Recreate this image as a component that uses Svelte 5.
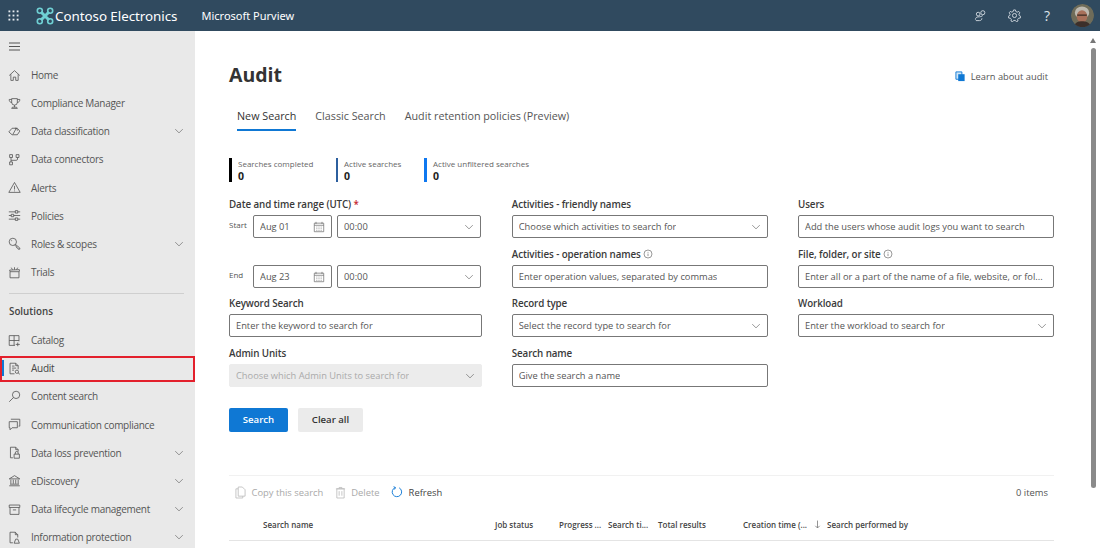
<script>
  const top = [
    { label: 'Home', icon: 'home' },
    { label: 'Compliance Manager', icon: 'trophy' },
    { label: 'Data classification', icon: 'tag', more: true },
    { label: 'Data connectors', icon: 'flow' },
    { label: 'Alerts', icon: 'alert' },
    { label: 'Policies', icon: 'sliders' },
    { label: 'Roles & scopes', icon: 'key', more: true },
    { label: 'Trials', icon: 'gift' }
  ];
  const solutions = [
    { label: 'Catalog', icon: 'catalog' },
    { label: 'Audit', icon: 'audit', active: true },
    { label: 'Content search', icon: 'search' },
    { label: 'Communication compliance', icon: 'chat' },
    { label: 'Data loss prevention', icon: 'lock', more: true },
    { label: 'eDiscovery', icon: 'bank', more: true },
    { label: 'Data lifecycle management', icon: 'archive', more: true },
    { label: 'Information protection', icon: 'shield', more: true }
  ];
  const paths = {
    home: 'M1.500 8 8 2l6.500 6M3.500 6.500V14h3v-4h3v4h3V6.500',
    trophy: 'M4.500 2h7v4.500a3.500 3.500 0 0 1-7 0zM4.500 3H1.500c0 2.500 1 3.500 3.200 3.800M11.500 3h3c0 2.500-1 3.500-3.200 3.800M8 10v2.500M4.500 14h7l-1-1.500h-5z',
    tag: 'M1 8.500 5 4h6.500l3 3.500-3 4.500H5zM6 11.500 10.500 3.500M8.500 4a2.500 2.500 0 0 1 3 3',
    flow: 'M2 2h3.500v3.500H2zM10 2h3.500v3.500H10zM2 11h3.500v3.500H2zM3.700 5.500V11M11.700 5.500V7.500a1.500 1.500 0 0 1-1.500 1.500H3.700',
    alert: 'M8 1.800 15 14H1zM8 6v4.500M8 11.700v1',
    sliders: 'M1 3.500h8M12 3.500h3M1 8h3M7 8h8M1 12.500h8M12 12.500h3M9 2v3h3V2zM4 6.500v3h3v-3zM9 11v3h3v-3z',
    key: 'M6 1.500a4.500 4.500 0 1 1-.1 9 4.500 4.500 0 0 1 .1-9zM9 9l5.500 4.500v1.500h-2l-.5-1.500-1.500-.5v-1.200L8 10M4 4.500h1',
    gift: 'M2.500 7h11v7.500h-11zM2.500 7l-.5-2 12-.5v2.500M5.500 4.500 4 2M8 4.500V1.500M10.500 4.500 12 2',
    catalog: 'M1.500 2h12v7M1.500 2v12h7M7.500 2v12M1.500 8h12M12 10.500V15M9.500 12.800H14.500',
    audit: 'M2.500 1.500h7l3 3V9M2.500 1.500V14.500H8M9.500 1.500v3h3M5 5h3M5 7.500h5M5 10h2.500M11 10a2 2 0 1 1-.1 4 2 2 0 0 1 .1-4zM12.500 13.500l2 1.500',
    search: 'M10 1.500a4.500 4.500 0 1 1-.1 9 4.500 4.500 0 0 1 .1-9zM6.700 9.300 1.500 14.500',
    chat: 'M3.500 1.500h11V10H13M1.500 4.500h10V12H5l-2.500 2.500V12H1.500z',
    lock: 'M9.500 1.500H3v13h3M9.500 1.500l3 3V7M9.500 1.500v3h3M7.500 10h6.500v5H7.500zM9 10V8.500a1.700 1.700 0 0 1 3.500 0V10',
    bank: 'M1.500 6 8 2l6.500 4zM3.500 7v5M6.500 7v5M9.500 7v5M12.500 7v5M1.500 14.500h13M2.500 12.500h11',
    archive: 'M1.500 2.500h13v3h-13zM2.500 5.500v8.500h11V5.500M6 8.500h4',
    shield: 'M9 1.500H2.500v13H6M9 1.500l3 3V8M9 1.500v3h3M7.500 15l2-5h2.500l2 5z'
  };
  const stats = [
    { label: 'Searches completed', tone: 'black', cls: 'w1' },
    { label: 'Active searches', tone: 'navy', cls: 'w2' },
    { label: 'Active unfiltered searches', tone: 'blue', cls: 'w3' }
  ];
  const columns = [
    { label: 'Search name', cls: 'c1' },
    { label: 'Job status', cls: 'c2' },
    { label: 'Progress ...', cls: 'c3' },
    { label: 'Search ti...', cls: 'c4' },
    { label: 'Total results', cls: 'c5' },
    { label: 'Creation time (...', cls: 'c6' }
  ];
</script>

{#snippet chevron(cls = '')}
  <svg class="chev {cls}" viewBox="0 0 12 8" aria-hidden="true"><path d="M1 1.500 6 6.500l5-5" /></svg>
{/snippet}

{#snippet info()}
  <svg class="info" viewBox="0 0 12 12" aria-hidden="true"><circle cx="6" cy="6" r="4.800" /><path d="M6 5.500v3M6 3.500v1" /></svg>
{/snippet}

{#snippet calendar()}
  <svg class="cal" viewBox="0 0 14 14" aria-hidden="true"><path d="M1.500 2.500h11v10h-11zM1.500 5h11M3.500 1v2.500M10.500 1v2.500M4 7h1M6.500 7h1M9 7h1M4 9h1M6.500 9h1M9 9h1M4 11h1M6.500 11h1M9 11h1" /></svg>
{/snippet}

{#snippet navRow(item)}
  <div class="nav-row" class:active={item.active}>
    <svg class="nav-icon" viewBox="0 0 16 16" aria-hidden="true"><path d={paths[item.icon]} /></svg>
    <span class="nav-label">{item.label}</span>
    {#if item.more}{@render chevron('nav-chev')}{/if}
  </div>
{/snippet}

<div class="page">
  <header class="topbar">
    <svg class="waffle" viewBox="0 0 12 12" aria-hidden="true">
      {#each [1.500, 6, 10.500] as y}
        {#each [1.500, 6, 10.500] as x}
          <rect x={x - 1} y={y - 1} width="2" height="2" />
        {/each}
      {/each}
    </svg>
    <svg class="logo" viewBox="0 0 18 18" aria-hidden="true">
      <path class="logo-x" d="M5 5 13 13M13 5 5 13" />
      <circle class="logo-c" cx="3.800" cy="3.800" r="2.500" />
      <circle class="logo-c" cx="14.200" cy="3.800" r="2.500" />
      <circle class="logo-c" cx="3.800" cy="14.200" r="2.500" />
      <circle class="logo-c" cx="14.200" cy="14.200" r="2.500" />
    </svg>
    <span class="brand">Contoso Electronics</span>
    <span class="product">Microsoft Purview</span>
    <span class="spacer"></span>
    <svg class="top-icon people" viewBox="0 0 14 14" aria-hidden="true"><circle cx="9.500" cy="4" r="2.200" /><circle cx="4.500" cy="5.500" r="2" /><path d="M1.500 11.500c0-2 1.500-3 3-3 2 0 4-.5 5-1.500M2 12.500h4c1.500 0 2.500-1 2.500-2.500" /></svg>
    <svg class="top-icon gear" viewBox="0 0 14 14" aria-hidden="true"><circle cx="7" cy="7" r="2.200" /><path d="M6 1h2l.4 1.700 1.500.7 1.600-.8 1.200 1.500-1 1.500.4 1.400 1.500.9-.4 1.900-1.800.1-1 1.300.4 1.700-1.800.8-1.100-1.400H6.100l-1.100 1.400-1.800-.8.4-1.700-1-1.300-1.800-.1-.4-1.900 1.500-.9.400-1.400-1-1.500 1.200-1.500 1.600.8 1.500-.7z" /></svg>
    <span class="help">?</span>
    <svg class="avatar" viewBox="0 0 24 24" aria-hidden="true">
      <circle cx="12" cy="12" r="12" fill="#6f6c59" />
      <ellipse cx="11.500" cy="9" rx="7.500" ry="6.500" fill="#bdb9b0" />
      <ellipse cx="11.500" cy="13" rx="5.500" ry="6.500" fill="#a8705a" />
      <path d="M6.500 11.500h10" stroke="#3a2a22" stroke-width="1.300" />
      <path d="M3 24c1-5 5-6 8.500-6s8 1 9.500 6z" fill="#3c2f2a" />
    </svg>
  </header>

  <div class="body">
    <nav class="sidebar">
      <svg class="burger" viewBox="0 0 11 9" aria-hidden="true"><path d="M0 1h11M0 4.500h11M0 8h11" /></svg>
      <div class="nav-group first">
        {#each top as item}{@render navRow(item)}{/each}
      </div>
      <div class="divider"></div>
      <div class="section">Solutions</div>
      <div class="nav-group">
        {#each solutions as item}{@render navRow(item)}{/each}
      </div>
    </nav>

    <main class="main">
      <div class="title-row">
        <h1>Audit</h1>
        <a class="learn">
          <svg viewBox="0 0 12 12" aria-hidden="true"><path class="doc-back" d="M1 1h6.500v8H1z" /><path class="doc-front" d="M3.500 3.500H10.500V11H3.500z" /></svg>
          Learn about audit
        </a>
      </div>

      <div class="tabs">
        <span class="tab current">New Search</span>
        <span class="tab">Classic Search</span>
        <span class="tab">Audit retention policies (Preview)</span>
      </div>

      <div class="stats">
        {#each stats as s}
          <div class="stat {s.tone} {s.cls}">
            <span class="stat-label">{s.label}</span>
            <strong>0</strong>
          </div>
        {/each}
      </div>

      <div class="form">
        <div class="col col-a">
          <div class="label">Date and time range (UTC) <span class="req">*</span></div>
          <div class="date-row">
            <span class="side">Start</span>
            <div class="box date"><span>Aug 01</span>{@render calendar()}</div>
            <div class="box time"><span>00:00</span>{@render chevron()}</div>
          </div>
          <div class="date-row second">
            <span class="side">End</span>
            <div class="box date"><span>Aug 23</span>{@render calendar()}</div>
            <div class="box time"><span>00:00</span>{@render chevron()}</div>
          </div>
          <div class="field keyword">
            <div class="label">Keyword Search</div>
            <div class="box"><span>Enter the keyword to search for</span></div>
          </div>
          <div class="field">
            <div class="label">Admin Units</div>
            <div class="box disabled"><span>Choose which Admin Units to search for</span>{@render chevron()}</div>
          </div>
        </div>

        <div class="col col-b">
          <div class="field">
            <div class="label">Activities - friendly names</div>
            <div class="box"><span>Choose which activities to search for</span>{@render chevron()}</div>
          </div>
          <div class="field">
            <div class="label">Activities - operation names {@render info()}</div>
            <div class="box"><span>Enter operation values, separated by commas</span></div>
          </div>
          <div class="field">
            <div class="label">Record type</div>
            <div class="box"><span>Select the record type to search for</span>{@render chevron()}</div>
          </div>
          <div class="field">
            <div class="label">Search name</div>
            <div class="box"><span>Give the search a name</span></div>
          </div>
        </div>

        <div class="col col-c">
          <div class="field">
            <div class="label">Users</div>
            <div class="box"><span>Add the users whose audit logs you want to search</span></div>
          </div>
          <div class="field">
            <div class="label">File, folder, or site {@render info()}</div>
            <div class="box"><span>Enter all or a part of the name of a file, website, or fol...</span></div>
          </div>
          <div class="field">
            <div class="label">Workload</div>
            <div class="box"><span>Enter the workload to search for</span>{@render chevron()}</div>
          </div>
        </div>
      </div>

      <div class="actions">
        <button class="primary">Search</button>
        <button class="secondary">Clear all</button>
      </div>

      <div class="toolbar">
        <span class="tool muted">
          <svg viewBox="0 0 12 14" aria-hidden="true"><path d="M3.500 3H1v10h7.500v-2M3.500 1H8l3 3v7H3.500z" /></svg>
          Copy this search
        </span>
        <span class="tool muted">
          <svg viewBox="0 0 12 14" aria-hidden="true"><path d="M2 3h8v10H2zM1 3h10M4.500 3V1.500h3V3M4.500 5.500v5M7.500 5.500v5" /></svg>
          Delete
        </span>
        <span class="tool refresh">
          <svg viewBox="0 0 14 14" aria-hidden="true"><path d="M5 1.800A5.500 5.500 0 1 0 9.500 2.100M3 .8l2.200 1-1 2.200" /></svg>
          Refresh
        </span>
        <span class="items">0 items</span>
      </div>

      <div class="thead">
        {#each columns as c}
          <span class={c.cls}>{c.label}</span>
        {/each}
        <svg class="arrow" viewBox="0 0 8 10" aria-hidden="true"><path d="M4 .5v8.500M1.500 6.500 4 9l2.500-2.500" /></svg>
        <span class="c7">Search performed by</span>
      </div>
    </main>

    <div class="scrollbar">
      <span class="up"></span>
      <span class="thumb"></span>
    </div>
  </div>

  <div class="highlight"></div>
</div>

<style>
  :global(body) { margin: 0; background: #fff; overflow: hidden; }
  .page {
    position: relative;
    width: 1100px;
    height: 548px;
    overflow: hidden;
    font-family: "Open Sans", "Noto Sans", "Liberation Sans", sans-serif;
    font-size: 9.500px;
    color: #333;
  }
  .topbar {
    display: flex;
    align-items: center;
    height: 31px;
    background: #304a5f;
    color: #fff;
  }
  .waffle { width: 11px; height: 11px; margin-left: 8px; fill: #e8edf1; }
  .logo { width: 18px; height: 18px; margin-left: 17px; }
  .logo-x { fill: none; stroke: #6fd0d4; stroke-width: 3; }
  .logo-c { fill: none; stroke: #6fd0d4; stroke-width: 1.600; }
  .brand { margin-left: 1px; font-family: "Noto Sans", sans-serif; font-size: 13.400px; letter-spacing: -.05px; }
  .product { margin-left: 24px; font-family: "Noto Sans", sans-serif; font-size: 11px; }
  .spacer { flex: 1; }
  .top-icon { width: 13px; height: 13px; fill: none; stroke: #dfe5ea; stroke-width: .9; }
  .people { margin-right: 21px; }
  .gear { margin-right: 23px; }
  .help { font-size: 14px; color: #dfe5ea; width: 9px; margin-right: 18px; }
  .avatar { width: 23px; height: 23px; margin-right: 6px; border-radius: 50%; }

  .body { display: flex; height: 517px; }
  .sidebar {
    width: 195px;
    flex: none;
    background: #e9e9e9;
    overflow: hidden;
    box-sizing: border-box;
    padding-top: 11px;
  }
  .burger { display: block; width: 11px; height: 9px; margin-left: 9px; fill: none; stroke: #444; stroke-width: .9; }
  .nav-group { display: flex; flex-direction: column; }
  .nav-group.first { margin-top: 10px; }
  .nav-row {
    position: relative;
    display: flex;
    align-items: center;
    height: 28.150px;
    padding-left: 8px;
    color: #555;
    font-size: 10px;
    letter-spacing: -.28px;
  }
  .nav-row.active { color: #444; }
  .nav-row.active::before {
    content: "";
    position: absolute;
    left: 1px;
    top: 6px;
    bottom: 6px;
    width: 3px;
    background: #0f78d4;
  }
  .nav-icon { width: 13px; height: 13px; flex: none; fill: none; stroke: #555; stroke-width: 1; }
  .nav-label { margin-left: 10px; white-space: nowrap; }
  :global(.chev) { fill: none; stroke: #666; stroke-width: .9; width: 10px; height: 6px; flex: none; }
  :global(.nav-chev) { position: absolute; right: 11px; top: 11px; }
  .divider { height: 1px; background: #cfcfcf; margin: 7px 11px 0 9px; }
  .section { margin: 11px 0 7px 9px; height: 14px; line-height: 14px; font-size: 9.800px; font-weight: 600; color: #444; }

  .main { flex: 1; min-width: 0; box-sizing: border-box; padding: 0 0 0 34px; }
  .title-row { display: flex; align-items: center; justify-content: space-between; height: 30px; margin-top: 29px; padding-right: 42px; }
  h1 { margin: 0; font-size: 19.500px; font-weight: 700; color: #333; line-height: 30px; }
  .learn { display: flex; align-items: center; gap: 5px; font-size: 9.300px; color: #555; position: relative; top: 1px; }
  .learn svg { width: 11px; height: 11px; }
  .doc-back { fill: #cfe6f7; stroke: #0f78d4; }
  .doc-front { fill: #0f78d4; }

  .tabs { display: flex; gap: 19px; margin: 11px 0 0 8px; height: 30px; }
  .tab { font-size: 10.750px; color: #555; line-height: 30px; height: 30px; box-sizing: border-box; white-space: nowrap; }
  .tab.current { color: #333; font-weight: 500; border-bottom: 2px solid #0f78d4; }

  .stats { display: flex; margin-top: 26px; height: 26px; }
  .stat { display: flex; flex-direction: column; margin-top: 1px; padding-left: 6px; border-left: 3px solid #000; box-sizing: border-box; height: 24px; }
  .w1 { width: 107px; padding-left: 6px; }
  .w2 { width: 88px; border-left-width: 2px; }
  .w3 { width: 200px; border-left-width: 3px; }
  .navy { border-left-color: #2c5f9e; }
  .blue { border-left-color: #0f78f0; }
  .stat-label { font-size: 8px; line-height: 11px; color: #666; white-space: nowrap; }
  .stat strong { font-size: 10.500px; line-height: 15px; color: #222; }

  .form { display: grid; grid-template-columns: 252.500px 256px 256px; column-gap: 30.250px; margin-top: 15px; }
  .col { display: flex; flex-direction: column; }
  .field { height: 49.500px; flex: none; }
  .label { font-size: 9.800px; letter-spacing: -.1px; font-weight: 600; line-height: 13px; height: 13px; padding-bottom: 4px; color: #3a3a3a; display: flex; align-items: center; white-space: pre; }
  .req { color: #c4262e; }
  :global(.info) { width: 10px; height: 10px; fill: none; stroke: #666; stroke-width: .8; }
  .box {
    display: flex;
    align-items: center;
    justify-content: space-between;
    box-sizing: border-box;
    height: 23px;
    padding: 0 6px;
    border: 1px solid #777;
    border-radius: 2px;
    background: #fff;
    font-size: 9.300px;
    color: #555;
    white-space: nowrap;
  }
  .box span { overflow: hidden; }
  .box.disabled { background: #ececec; border-color: #ececec; color: #aaa; }
  .date-row { display: flex; align-items: center; height: 23px; }
  .date-row.second { margin-top: 27px; }
  .side { width: 24px; font-size: 8px; color: #555; margin-bottom: 5px; }
  .second .side { margin-bottom: 4px; }
  .date { width: 79px; margin-right: 5px; padding-right: 6px; }
  .time { width: 144px; padding-right: 6px; }
  :global(.cal) { width: 12px; height: 12px; fill: none; stroke: #666; stroke-width: .8; }
  .keyword { margin-top: 9px; height: 50px; }

  .actions { display: flex; gap: 10px; margin-top: 11px; }
  button { height: 24px; border: 0; border-radius: 2px; font: 600 9.600px "Open Sans", sans-serif; padding: 0; }
  .primary { width: 59px; background: #0f78d4; color: #fff; }
  .secondary { width: 65px; background: #ebebeb; color: #333; }

  .toolbar {
    display: flex;
    align-items: center;
    gap: 11.500px;
    margin: 43px 36px 0 0;
    padding-left: 6px;
    height: 33px;
    border-top: 1px solid #f1f1f1;
    font-size: 9.400px;
  }
  .tool { display: flex; align-items: center; gap: 5.500px; white-space: nowrap; }
  .tool svg { width: 11px; height: 13px; fill: none; stroke: #bbb; stroke-width: .9; }
  .muted { color: #a9a9a9; }
  .refresh { color: #444; }
  .refresh svg { width: 12px; height: 12px; stroke: #0f78d4; stroke-width: 1.100; }
  .items { margin-left: auto; margin-right: 6px; color: #555; }

  .thead {
    display: grid;
    grid-template-columns: 34px 232px 64px 49px 50px 85px 71px 13px auto;
    align-items: center;
    margin: 4px 36px 0 0;
    height: 23px;
    border-bottom: 1px solid #e4e4e4;
    padding-bottom: 4px;
    font-size: 8px;
    font-weight: 600;
    color: #444;
    white-space: nowrap;
  }
  .c1 { grid-column: 2; }
  .arrow { width: 7px; height: 9px; fill: none; stroke: #777; stroke-width: .9; }

  .scrollbar { position: relative; width: 7px; flex: none; margin-right: 3px; }
  .up { position: absolute; top: 7px; left: 0; border: 3.500px solid transparent; border-top: 0; border-bottom: 5px solid #777; }
  .thumb { position: absolute; top: 17px; left: 1px; width: 5px; height: 440px; background: #8a8a8a; border-radius: 3px; }

  .highlight { position: absolute; left: 0; top: 356px; width: 195px; height: 26px; box-sizing: border-box; border: 2px solid #e3202c; pointer-events: none; }
</style>
